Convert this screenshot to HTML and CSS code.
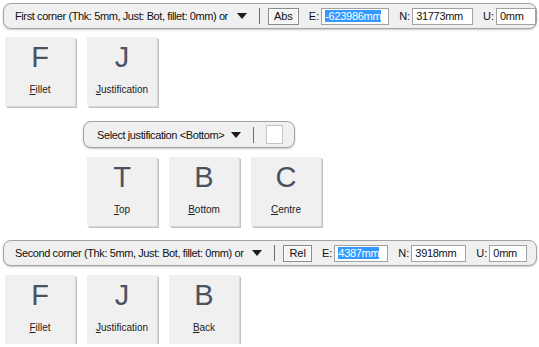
FILE: index.html
```html
<!DOCTYPE html>
<html>
<head>
<meta charset="utf-8">
<link rel="stylesheet" href="styles.css">
</head>
<body>
<div class="page">
  <div class="bar bar-wide">
    <span class="prompt">First corner (Thk: 5mm, Just: Bot, fillet: 0mm) or</span>
    <span class="caret"></span>
    <span class="sep"></span>
    <span class="mode">Abs</span>
    <span class="lbl">E:</span><span class="field w-e1"><span class="sel">-623986mm</span></span>
    <span class="lbl">N:</span><span class="field w-n1">31773mm</span>
    <span class="lbl">U:</span><span class="field w-u1">0mm</span>
  </div>
  <div class="tiles tiles-1">
    <div class="tile"><span class="big">F</span><span class="cap"><u>F</u>illet</span></div>
    <div class="tile"><span class="big">J</span><span class="cap"><u>J</u>ustification</span></div>
  </div>
  <div class="bar bar-narrow">
    <span class="prompt">Select justification &lt;Bottom&gt;</span>
    <span class="caret caret-n"></span>
    <span class="sep"></span>
    <span class="blank"></span>
  </div>
  <div class="tiles tiles-2">
    <div class="tile"><span class="big">T</span><span class="cap"><u>T</u>op</span></div>
    <div class="tile"><span class="big">B</span><span class="cap"><u>B</u>ottom</span></div>
    <div class="tile"><span class="big">C</span><span class="cap"><u>C</u>entre</span></div>
  </div>
  <div class="bar bar-wide bar-3">
    <span class="prompt">Second corner (Thk: 5mm, Just: Bot, fillet: 0mm) or</span>
    <span class="caret"></span>
    <span class="sep"></span>
    <span class="mode">Rel</span>
    <span class="lbl">E:</span><span class="field w-e3"><span class="sel">4387mm</span></span>
    <span class="lbl">N:</span><span class="field w-n3">3918mm</span>
    <span class="lbl">U:</span><span class="field w-u3">0mm</span>
  </div>
  <div class="tiles tiles-3">
    <div class="tile"><span class="big">F</span><span class="cap"><u>F</u>illet</span></div>
    <div class="tile"><span class="big">J</span><span class="cap"><u>J</u>ustification</span></div>
    <div class="tile"><span class="big">B</span><span class="cap"><u>B</u>ack</span></div>
  </div>
</div>
</body>
</html>
```
FILE: styles.css
```css
html, body {
  margin: 0;
  padding: 0;
  background: #ffffff;
}
.page {
  padding: 3px 0 0 0;
  font-family: "Liberation Sans", Arial, sans-serif;
  color: #111;
}
.bar {
  display: flex;
  align-items: center;
  box-sizing: border-box;
  background: #f0f0f0;
  border: 1px solid #a3a3a3;
  border-radius: 8px;
  box-shadow: 0 1px 2px rgba(0,0,0,0.22);
  font-size: 11px;
  letter-spacing: -0.4px;
}
.bar-wide {
  margin-left: 3px;
  width: 534px;
  height: 26px;
  padding-left: 11px;
}
.bar-3 {
  margin-top: 14px;
}
.bar-narrow {
  margin-left: 83px;
  margin-top: 15px;
  width: 212px;
  height: 27px;
  padding-left: 13px;
}
.prompt {
  white-space: nowrap;
}
.caret {
  width: 0;
  height: 0;
  margin-left: 9px;
  border-left: 5px solid transparent;
  border-right: 5px solid transparent;
  border-top: 6px solid #1a1a1a;
}
.caret-n {
  margin-left: 7px;
}
.sep {
  width: 1px;
  height: 16px;
  background: #6e6e6e;
  margin-left: 12px;
}
.mode {
  box-sizing: border-box;
  margin-left: 8px;
  height: 17px;
  padding: 0 5px;
  line-height: 15px;
  background: #f4f4f4;
  border: 1px solid #8a8a8a;
  box-shadow: inset 0 0 0 1px #ffffff;
  letter-spacing: 0;
}
.lbl {
  margin-left: 10px;
  margin-right: 2px;
  letter-spacing: 0;
}
.field {
  box-sizing: border-box;
  height: 17px;
  line-height: 15px;
  padding-left: 3px;
  background: #ffffff;
  border: 1px solid #a2a2a2;
  white-space: nowrap;
  letter-spacing: -0.3px;
}
.sel {
  background: #3399ff;
  color: #ffffff;
}
.w-e1 { width: 68px; }
.w-n1 { width: 61px; }
.w-u1 { width: 40px; }
.w-e3 { width: 54px; }
.w-n3 { width: 55px; }
.w-u3 { width: 38px; }
.blank {
  box-sizing: border-box;
  margin-left: 12px;
  width: 17px;
  height: 19px;
  background: #ffffff;
  border: 1px solid #c4c4c4;
}
.tiles {
  display: flex;
  gap: 12px;
}
.tiles-1 {
  margin-left: 5px;
  margin-top: 8px;
}
.tiles-2 {
  margin-left: 87px;
  margin-top: 9px;
}
.tiles-3 {
  margin-left: 5px;
  margin-top: 9px;
}
.tile {
  box-sizing: border-box;
  width: 70px;
  height: 69px;
  background: #f0f0f0;
  box-shadow: 1px 1px 0 #d8d8d8, 2px 2px 0 #c2c2c2;
  display: flex;
  flex-direction: column;
  align-items: center;
  padding-top: 6px;
}
.big {
  font-size: 29px;
  line-height: 29px;
  color: #4a5262;
}
.cap {
  margin-top: 12px;
  font-size: 10px;
  line-height: 12px;
  color: #222;
}
```
